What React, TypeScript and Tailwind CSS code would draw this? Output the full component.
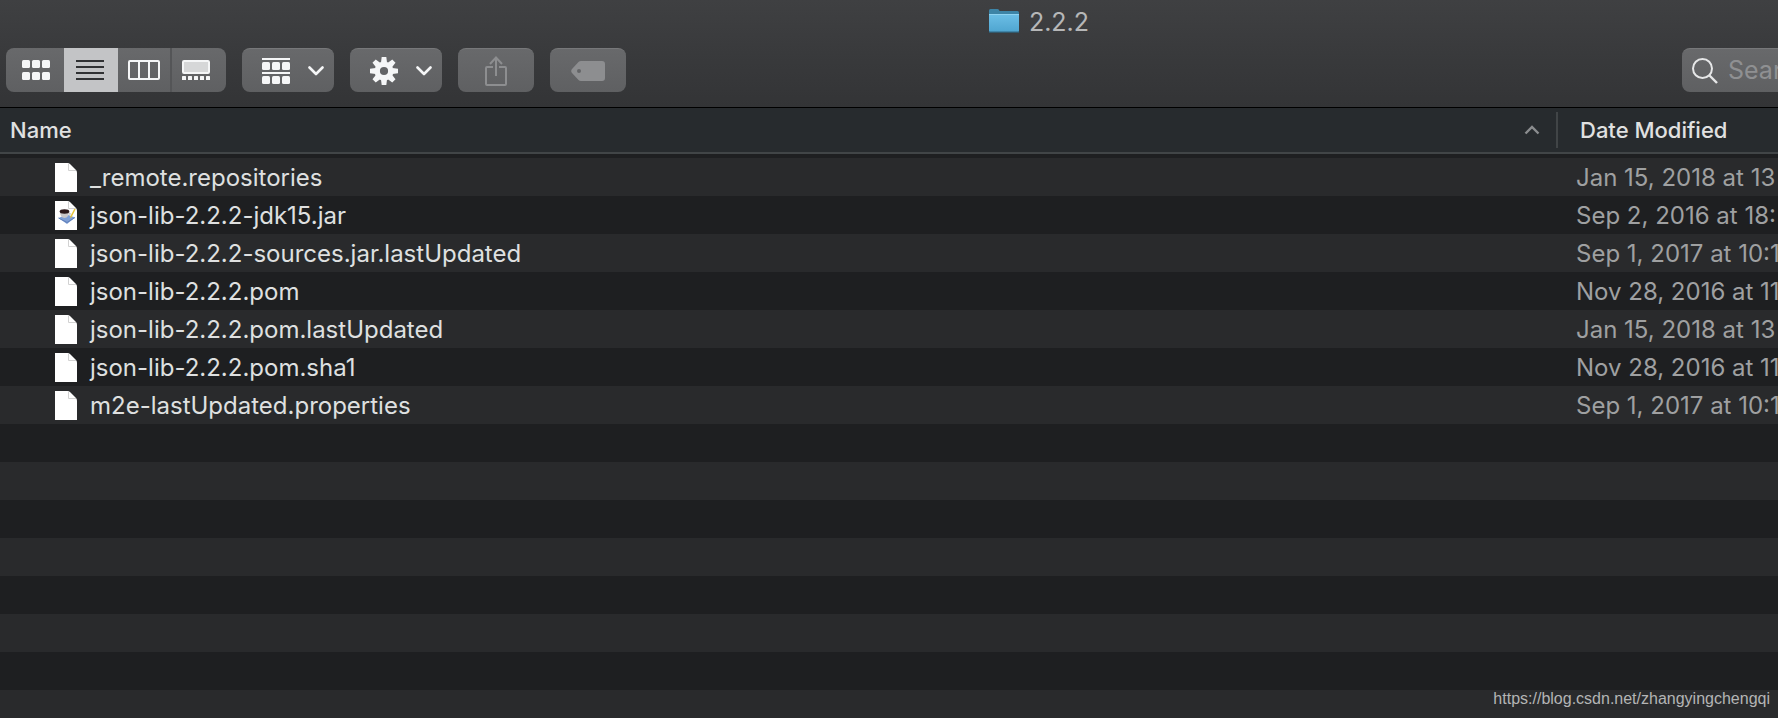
import type { ReactNode } from 'react';
import { useState } from 'react';
import clsx from 'clsx';

interface FileEntry {
  name: string;
  modified: string;
  kind: 'document' | 'jar';
}

const FILES: FileEntry[] = [
  { name: '_remote.repositories', modified: 'Jan 15, 2018 at 13', kind: 'document' },
  { name: 'json-lib-2.2.2-jdk15.jar', modified: 'Sep 2, 2016 at 18:', kind: 'jar' },
  { name: 'json-lib-2.2.2-sources.jar.lastUpdated', modified: 'Sep 1, 2017 at 10:1', kind: 'document' },
  { name: 'json-lib-2.2.2.pom', modified: 'Nov 28, 2016 at 11', kind: 'document' },
  { name: 'json-lib-2.2.2.pom.lastUpdated', modified: 'Jan 15, 2018 at 13', kind: 'document' },
  { name: 'json-lib-2.2.2.pom.sha1', modified: 'Nov 28, 2016 at 11', kind: 'document' },
  { name: 'm2e-lastUpdated.properties', modified: 'Sep 1, 2017 at 10:1', kind: 'document' },
];

const EMPTY_ROWS = 8;

function FolderIcon() {
  return (
    <svg width="30" height="26" viewBox="0 0 30 26" aria-hidden="true">
      <defs>
        <linearGradient id="folder-front" x1="0" y1="0" x2="0" y2="1">
          <stop offset="0" stopColor="#6cbfe6" />
          <stop offset="1" stopColor="#4fa5d0" />
        </linearGradient>
      </defs>
      <path d="M0 5V2.5Q0 1 1.5 1H8.5Q9.5 1 10 2L10.5 3H28.5Q30 3 30 4.5V8H0Z" fill="#3d84a6" />
      <rect y="6" width="30" height="18" rx="1" fill="url(#folder-front)" />
      <rect y="6" width="30" height="1" fill="#8fd2f0" />
      <rect y="23.5" width="30" height="1.2" fill="#2f6783" />
    </svg>
  );
}

function FileIcon({ kind }: { kind: FileEntry['kind'] }) {
  return (
    <svg width="22" height="29" viewBox="0 0 22 29" className="shrink-0" aria-hidden="true">
      <path d="M0 0H12.5Q14 0 15 1L21 7Q22 8 22 9.5V29H0Z" fill="#fff" />
      <path d="M13.5 1V7.5H21" fill="none" stroke="#d2d2d2" />
      {kind === 'jar' && (
        <g>
          <path d="M3.5 17L12 13.5L20 16.5L12 23Z" fill="#7f9fd6" />
          <path d="M3.5 17L12 21.5L20 16.5" fill="none" stroke="#5f7fb8" />
          <path d="M5 10.5Q5 17 9.5 17Q14 17 14 10.5Z" fill="#c9c6c8" />
          <ellipse cx="9.5" cy="10.5" rx="4.8" ry="2.2" fill="#2b1719" />
          <path d="M14 12Q16.5 12 14 14.5" fill="none" stroke="#b5b2b5" />
          <path d="M20 8L15.5 16.5" stroke="#e8c53b" strokeWidth="1.6" />
        </g>
      )}
    </svg>
  );
}

function GridIcon() {
  return (
    <svg width="28" height="20" fill="currentColor" aria-hidden="true">
      {[0, 12].map((y) => [0, 10, 20].map((x) => <rect key={`${x}-${y}`} x={x} y={y} width="8" height="8" rx="1.5" />))}
    </svg>
  );
}

function ListIcon() {
  return (
    <svg width="28" height="20" fill="currentColor" aria-hidden="true">
      {[0, 6, 12, 18].map((y) => (
        <rect key={y} y={y} width="28" height="2" />
      ))}
    </svg>
  );
}

function ColumnsIcon() {
  return (
    <svg width="32" height="20" fill="none" stroke="currentColor" strokeWidth="2" aria-hidden="true">
      <rect x="1" y="1" width="30" height="18" rx="1" />
      <path d="M11 1V19M21 1V19" />
    </svg>
  );
}

function GalleryIcon() {
  return (
    <svg width="28" height="20" fill="currentColor" aria-hidden="true">
      <rect x="1" y="1" width="26" height="12" rx="1" fill="#d6d7d8" stroke="currentColor" strokeWidth="2" />
      {[0, 6, 12, 18, 24].map((x) => (
        <rect key={x} x={x} y="16" width="4" height="4" rx="0.6" />
      ))}
    </svg>
  );
}

function GroupIcon() {
  return (
    <svg width="28" height="26" fill="currentColor" aria-hidden="true">
      <rect width="28" height="2" />
      <rect y="14" width="28" height="2" />
      {[4, 18].map((y) => [0, 10, 20].map((x) => <rect key={`${x}-${y}`} x={x} y={y} width="8" height="8" rx="1.5" />))}
    </svg>
  );
}

function GearIcon() {
  return (
    <svg width="28" height="28" viewBox="-14 -14 28 28" aria-hidden="true">
      <circle r="6.8" fill="none" stroke="currentColor" strokeWidth="5.4" />
      {[0, 45, 90, 135, 180, 225, 270, 315].map((angle) => (
        <path key={angle} d="M-3 -8.5L-2.3 -14H2.3L3 -8.5Z" fill="currentColor" transform={`rotate(${angle})`} />
      ))}
    </svg>
  );
}

function ShareIcon() {
  return (
    <svg width="22" height="30" fill="none" stroke="currentColor" strokeWidth="2" aria-hidden="true">
      <path d="M8 11H2Q1 11 1 12V28Q1 29 2 29H20Q21 29 21 28V12Q21 11 20 11H14" />
      <path d="M11 20V1.5M5 8L11 1.5L17 8" />
    </svg>
  );
}

function TagIcon() {
  return (
    <svg width="34" height="20" aria-hidden="true">
      <path
        fillRule="evenodd"
        fill="currentColor"
        d="M10 0H31Q34 0 34 3V17Q34 20 31 20H10Q8.5 20 7.5 19L1 12Q-0.6 10 1 8L7.5 1Q8.5 0 10 0ZM8 8A2 2 0 1 0 8 12A2 2 0 1 0 8 8Z"
      />
    </svg>
  );
}

function ChevronIcon() {
  return (
    <svg width="16" height="10" fill="none" stroke="currentColor" strokeWidth="2.6" aria-hidden="true">
      <path d="M1.5 1.5L8 8L14.5 1.5" strokeLinecap="round" strokeLinejoin="round" />
    </svg>
  );
}

const VIEWS = [
  { id: 'icons', label: 'Icon view', icon: GridIcon, size: 'w-[58px] pl-0.5' },
  { id: 'list', label: 'List view', icon: ListIcon, size: 'w-[54px] pr-0.5' },
  { id: 'columns', label: 'Column view', icon: ColumnsIcon, size: 'w-[52px]' },
  { id: 'gallery', label: 'Gallery view', icon: GalleryIcon, size: 'w-14 pr-1.5 border-l-2 border-[#545557]' },
];

interface ToolbarButtonProps {
  label: string;
  disabled?: boolean;
  menu?: boolean;
  children: ReactNode;
}

function ToolbarButton({ label, disabled, menu, children }: ToolbarButtonProps) {
  return (
    <button
      type="button"
      aria-label={label}
      disabled={disabled}
      className={clsx(
        'flex h-11 items-center rounded-lg border-t border-[#77787a] bg-linear-to-b from-[#68696b] to-[#5f6062]',
        menu ? 'w-[92px] justify-between pr-2.5 pl-5' : 'w-[76px] justify-center',
        disabled ? 'text-[#8d8e90]' : 'text-[#f5f6f7]'
      )}
    >
      {children}
      {menu && <ChevronIcon />}
    </button>
  );
}

function Toolbar() {
  const [view, setView] = useState('list');

  return (
    <div className="flex items-center gap-4 pl-1.5">
      <div className="flex h-11 overflow-hidden rounded-lg bg-linear-to-b from-[#68696b] to-[#5f6062]">
        {VIEWS.map(({ id, label, icon: Icon, size }) => (
          <button
            key={id}
            type="button"
            aria-label={label}
            aria-pressed={view === id}
            onClick={() => setView(id)}
            className={clsx(
              'flex items-center justify-center',
              size,
              view === id ? 'bg-[#c3c4c6] text-[#303133]' : 'text-[#f5f6f7]'
            )}
          >
            <Icon />
          </button>
        ))}
      </div>
      <ToolbarButton label="Group items" menu>
        <GroupIcon />
      </ToolbarButton>
      <ToolbarButton label="Actions" menu>
        <GearIcon />
      </ToolbarButton>
      <ToolbarButton label="Share" disabled>
        <ShareIcon />
      </ToolbarButton>
      <ToolbarButton label="Edit tags" disabled>
        <TagIcon />
      </ToolbarButton>

      {/* Search field runs off the right edge */}
      <label className="ml-auto flex h-11 w-24 items-center gap-2.5 overflow-hidden rounded-l-lg border-t border-[#77787a] bg-linear-to-b from-[#68696b] to-[#5f6062] pl-2.5">
        <svg width="26" height="26" fill="none" stroke="#e6e7e8" strokeWidth="2" className="shrink-0" aria-hidden="true">
          <circle cx="10.5" cy="10.5" r="9.5" />
          <path d="M17 17L25 25" strokeWidth="2.4" />
        </svg>
        <input
          type="text"
          aria-label="Search"
          placeholder="Search"
          className="w-40 shrink-0 bg-transparent text-[25px] text-[#dedfdf] outline-none placeholder:text-[#8f9092]"
        />
      </label>
    </div>
  );
}

function FileTable() {
  return (
    <table className="w-full table-fixed border-separate border-spacing-0 text-left">
      <colgroup>
        <col />
        <col className="w-[222px]" />
      </colgroup>
      <thead>
        <tr className="h-[46px] bg-[#272b2e] text-[22px] text-[#e0e1e1]">
          <th aria-sort="ascending" className="border-b-2 border-[#414547] p-0 font-medium">
            <button type="button" className="flex w-full items-center justify-between pr-4 pl-2.5">
              Name
              <svg width="16" height="10" fill="none" stroke="#8b8d8f" strokeWidth="2.4" aria-hidden="true">
                <path d="M1.5 8.5L8 2L14.5 8.5" />
              </svg>
            </button>
          </th>
          <th className="border-b-2 border-[#414547] p-0 font-medium">
            <div className="flex h-9 items-center border-l-2 border-[#414547] pl-[22px] whitespace-nowrap">Date Modified</div>
          </th>
        </tr>
      </thead>
      <tbody className="text-2xl before:block before:h-1 [&>tr:nth-child(odd)]:bg-[#292a2c]">
        {FILES.map((file) => (
          <tr key={file.name} className="h-[38px]">
            <td className="p-0">
              <div className="flex h-[38px] items-center gap-[13px] pl-[55px] whitespace-nowrap text-[#dfe0e0]">
                <FileIcon kind={file.kind} />
                <span className="pt-0.5">{file.name}</span>
              </div>
            </td>
            <td className="overflow-hidden p-0 pt-0.5 pl-5 whitespace-nowrap text-[#9fa0a1]">{file.modified}</td>
          </tr>
        ))}
        {Array.from({ length: EMPTY_ROWS }, (_, i) => (
          <tr key={i} className="h-[38px]" aria-hidden="true">
            <td className="p-0" />
            <td className="p-0" />
          </tr>
        ))}
      </tbody>
    </table>
  );
}

export default function App() {
  return (
    <div className="relative flex h-screen flex-col overflow-hidden bg-[#1e1f21] font-['Inter','Liberation_Sans',sans-serif]">
      <header className="border-b border-black bg-linear-to-b from-[#3f4042] to-[#333436] pb-[15px]">
        <h1 className="flex h-12 items-start justify-center gap-2.5 pt-1.5 pl-[300px] text-[25px] leading-8 text-[#b6b7b8]">
          <span className="pt-0.5">
            <FolderIcon />
          </span>
          2.2.2
        </h1>
        <Toolbar />
      </header>
      <main className="min-h-0 flex-1 overflow-hidden">
        <FileTable />
      </main>
      <a
        href="https://blog.csdn.net/zhangyingchengqi"
        className="absolute right-2 bottom-[9px] font-['Liberation_Sans',Arial,sans-serif] text-base leading-5 text-[#b4b5b5]"
      >
        https://blog.csdn.net/zhangyingchengqi
      </a>
    </div>
  );
}
